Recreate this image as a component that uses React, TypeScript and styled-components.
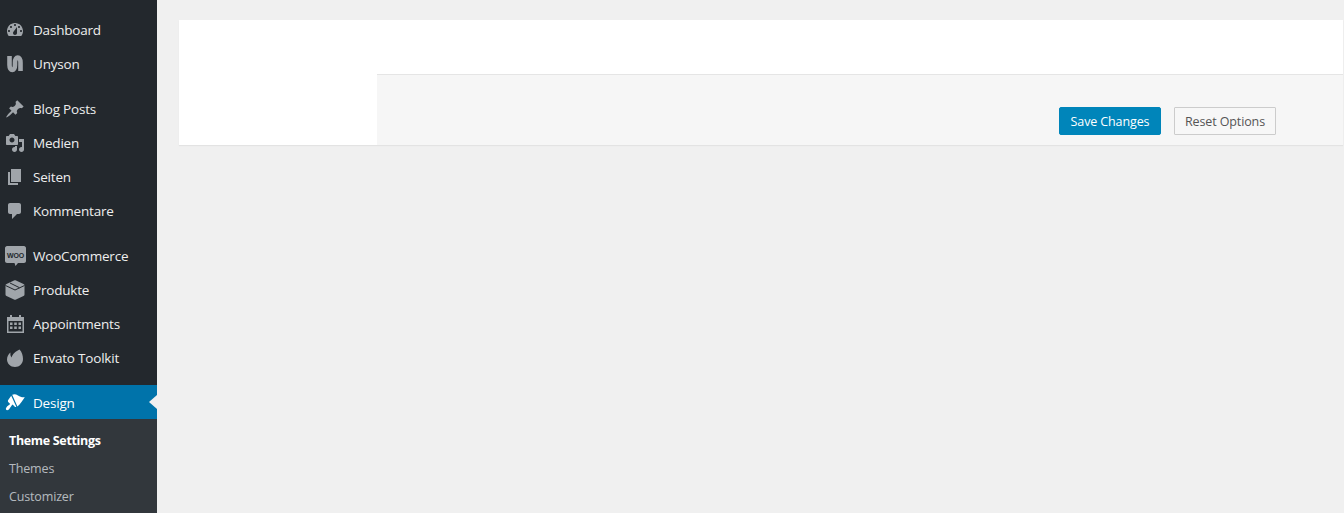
import React from 'react';
import styled, { createGlobalStyle } from 'styled-components';

const GlobalStyle = createGlobalStyle`
  html, body {
    margin: 0;
    height: 100%;
    overflow: hidden;
    background: #f0f0f0;
    font-family: 'Open Sans', 'Noto Sans', sans-serif;
  }
`;

const Page = styled.div`
  display: flex;
  height: 513px;
`;

const Sidebar = styled.nav`
  width: 157px;
  flex: none;
  padding-top: 13px;
  box-sizing: border-box;
  background: #23282d;
`;

const MenuGroup = styled.div<{ $gap: number }>`
  margin-bottom: ${p => p.$gap}px;
`;

const MenuItem = styled.div<{ $active?: boolean }>`
  position: relative;
  display: flex;
  align-items: center;
  height: 34px;
  box-sizing: border-box;
  padding-top: ${p => (p.$active ? 1 : 0)}px;
  font-size: 13.5px;
  letter-spacing: -0.2px;
  color: ${p => (p.$active ? '#fff' : '#eee')};
  background: ${p => (p.$active ? '#0073aa' : 'transparent')};
`;

const IconSlot = styled.span<{ $active?: boolean }>`
  display: flex;
  justify-content: center;
  align-items: center;
  width: 33px;
  height: 33px;
  padding-right: 3px;
  box-sizing: border-box;
  color: ${p => (p.$active ? '#fff' : '#a0a5aa')};
`;

const ActiveArrow = styled.span`
  position: absolute;
  right: 0;
  top: 10px;
  border: 7px solid transparent;
  border-left-width: 0;
  border-right: 8px solid #f0f0f0;
`;

const SubMenu = styled.div`
  background: #32373c;
  padding: 7px 0 3px;
  height: 94px;
`;

const SubItem = styled.div<{ $current?: boolean }>`
  display: flex;
  align-items: center;
  height: 28px;
  padding-left: 9px;
  font-size: 12.5px;
  letter-spacing: ${p => (p.$current ? -0.33 : -0.15)}px;
  font-weight: ${p => (p.$current ? 700 : 400)};
  color: ${p => (p.$current ? '#fff' : 'rgba(240, 245, 250, 0.7)')};
`;

const Main = styled.main`
  flex: 1;
  padding: 20px 1px 0 22px;
`;

const Card = styled.section`
  display: grid;
  grid-template-columns: 198px 1fr;
  height: 125px;
  background: #fff;
  box-shadow: 0 1px 1px rgba(0, 0, 0, 0.05);
`;

const Content = styled.div`
  display: flex;
  flex-direction: column;
  min-width: 0;
`;

const Body = styled.div`
  height: 54px;
`;

const Footer = styled.footer`
  flex: 1;
  display: flex;
  justify-content: flex-end;
  align-items: flex-start;
  gap: 13px;
  padding: 32px 67px 0 0;
  background: #f6f6f6;
  border-top: 1px solid #e5e5e5;
`;

const Button = styled.button<{ $primary?: boolean }>`
  width: 102px;
  height: 28px;
  padding: 0;
  box-sizing: border-box;
  font-family: inherit;
  font-size: 12.5px;
  letter-spacing: -0.12px;
  border-radius: ${p => (p.$primary ? 2 : 1)}px;
  border: 1px solid ${p => (p.$primary ? '#0085ba' : '#ccc')};
  color: ${p => (p.$primary ? '#fff' : '#555')};
  background: ${p => (p.$primary ? '#0085ba' : '#f7f7f7')};
`;

const Glyph = ({ d }: { d: string }) => (
  <svg width="20" height="20" viewBox="0 0 20 20" fill="currentColor">
    <path fillRule="evenodd" d={d} />
  </svg>
);

const UnysonIcon = () => (
  <svg width="20" height="20" viewBox="0 0 20 20" fill="none" stroke="currentColor" strokeWidth="4.600">
    <path d="M4.500 2v9c0 6.500 5.500 6.500 5.500 0V8.500c0-6.500 5.500-6.500 5.500 0V17" />
  </svg>
);

const WooIcon = () => (
  <svg width="21" height="22" viewBox="0 0 21 22">
    <path fill="currentColor" d="M2 1h17c1 0 2 1 2 2v13c0 1-1 2-2 2h-6l-2.500 3-1-3H2c-1 0-2-1-2-2V3c0-1 1-2 2-2z" />
    <text x="10.500" y="12.500" textAnchor="middle" fontFamily="'Liberation Sans', sans-serif" fontSize="7" fontWeight="700" fill="#23282d">
      WOO
    </text>
  </svg>
);

const BoxIcon = () => (
  <svg width="20" height="20" viewBox="0 0 20 20">
    <path
      fill="currentColor"
      d="M9 .400c.600-.300 1.400-.300 2 0l7.500 3.600c.600.300 1 .800 1 1.500v9c0 .700-.400 1.200-1 1.500L11 19.600c-.600.300-1.400.300-2 0L1.500 16c-.600-.300-1-.800-1-1.500v-9c0-.700.400-1.200 1-1.500z"
    />
    <path fill="none" stroke="#23282d" strokeWidth="1" d="M.500 5.500L10 10l9.500-4.500M5 3l9.500 4.700" />
  </svg>
);

const CalendarIcon = () => (
  <svg width="17" height="18" viewBox="0 0 17 18" fill="currentColor">
    <path fillRule="evenodd" d="M3 0h2v2h7V0h2v2h3v16H0V2h3zM1.500 6v10.500h14V6z" />
    <path d="M3 7.500h2.500v2.400H3zM7.200 7.500h2.600v2.400H7.200zM11.500 7.500H14v2.400h-2.500zM3 11.500h2.500v2.400H3zM7.200 11.500h2.600v2.400H7.200zM11.500 11.500H14v2.400h-2.500z" />
  </svg>
);

const LeafIcon = () => (
  <svg width="20" height="20" viewBox="0 0 20 20" fill="currentColor">
    <path d="M14.500 1.500c2.500 2.500 3.500 6 3.500 9.500 0 4.500-3.500 8-8 8s-8-3.500-8-7.500c0-3 1.500-5.500 3.500-7-.3 2 0 3.500 1 5C7.500 6 11 3 14.500 1.500z" />
  </svg>
);

const BrushIcon = () => (
  <svg width="20" height="20" viewBox="0 0 20 20" fill="currentColor">
    <path d="M7.200 1.800C9 .600 11 1.200 13 2.400c2.200 1.300 4.200 2.300 6.800 1.800-2 2.800-4.300 7-7.400 9.200z" />
    <path d="M6.200 2.700l5.100 11.100c-.500.400-1.100.300-1.500-.100L7.600 11.400c-1 1-2.200 2.600-3 4.200-.900 1.700-3 2.100-3.600.900-.600-1.300.900-3 2.300-4 .700-.500 1.300-1 1.900-1.500L3.200 9c-.500-.600-.500-1.300 0-1.900z" />
  </svg>
);

const dashboardPath =
  'M3.760 16h12.480c1.100-1.370 1.760-3.110 1.760-5 0-4.420-3.580-8-8-8s-8 3.580-8 8c0 1.890.660 3.630 1.760 5zM10 4c.550 0 1 .450 1 1s-.450 1-1 1-1-.450-1-1 .450-1 1-1zM6 6c.550 0 1 .450 1 1s-.450 1-1 1-1-.450-1-1 .450-1 1-1zm8 0c.550 0 1 .450 1 1s-.450 1-1 1-1-.450-1-1 .450-1 1-1zm-5.370 5.550L12 7v6c0 1.100-.900 2-2 2s-2-.900-2-2c0-.570.240-1.080.630-1.450zM4 10c.550 0 1 .450 1 1s-.450 1-1 1-1-.450-1-1 .450-1 1-1zm12 0c.550 0 1 .450 1 1s-.450 1-1 1-1-.450-1-1 .450-1 1-1z';
const pinPath =
  'M10.440 3.020l1.820-1.820 6.360 6.350-1.830 1.820c-1.050-.680-2.480-.570-3.410.360l-.750.750c-.920.930-1.040 2.350-.350 3.410l-1.830 1.820-2.410-2.410-2.800 2.790c-.420.420-3.380 2.710-3.800 2.290s1.860-3.390 2.280-3.810l2.790-2.790L4.100 9.360l1.830-1.820c1.050.690 2.480.570 3.400-.360l.750-.750c.930-.920 1.050-2.350.360-3.410z';
const mediaPath =
  'M13 11V4c0-.550-.450-1-1-1h-1.670L9 1H5L3.670 3H2c-.550 0-1 .450-1 1v7c0 .550.450 1 1 1h10c.550 0 1-.450 1-1zM7 4.500c1.380 0 2.500 1.120 2.500 2.500S8.380 9.500 7 9.500 4.500 8.380 4.500 7 5.620 4.500 7 4.500zM14 6h5v10.500c0 1.380-1.120 2.500-2.500 2.500S14 17.880 14 16.500s1.120-2.500 2.500-2.500c.170 0 .340.020.500.050V9h-3V6zm-4 8.050V13h2v3.500c0 1.380-1.120 2.500-2.500 2.500S7 17.880 7 16.500 8.120 14 9.500 14c.170 0 .340.020.500.050z';
const pagePath = 'M6 15V2h10v13H6zm-1 1h8v2H3V5h2v11z';
const commentPath =
  'M5 2h9c1.100 0 2 .900 2 2v7c0 1.100-.900 2-2 2h-2l-5 5v-5H5c-1.100 0-2-.900-2-2V4c0-1.100.900-2 2-2z';

type Item = { label: string; icon: React.ReactNode };

const groups: { gap: number; items: Item[] }[] = [
  {
    gap: 11,
    items: [
      { label: 'Dashboard', icon: <Glyph d={dashboardPath} /> },
      { label: 'Unyson', icon: <UnysonIcon /> },
    ],
  },
  {
    gap: 11,
    items: [
      { label: 'Blog Posts', icon: <Glyph d={pinPath} /> },
      { label: 'Medien', icon: <Glyph d={mediaPath} /> },
      { label: 'Seiten', icon: <Glyph d={pagePath} /> },
      { label: 'Kommentare', icon: <Glyph d={commentPath} /> },
    ],
  },
  {
    gap: 10,
    items: [
      { label: 'WooCommerce', icon: <WooIcon /> },
      { label: 'Produkte', icon: <BoxIcon /> },
      { label: 'Appointments', icon: <CalendarIcon /> },
      { label: 'Envato Toolkit', icon: <LeafIcon /> },
    ],
  },
];

export default function App() {
  return (
    <Page>
      <GlobalStyle />
      <Sidebar>
        {groups.map(group => (
          <MenuGroup key={group.items[0].label} $gap={group.gap}>
            {group.items.map(item => (
              <MenuItem key={item.label}>
                <IconSlot>{item.icon}</IconSlot>
                {item.label}
              </MenuItem>
            ))}
          </MenuGroup>
        ))}
        <MenuItem $active>
          <IconSlot $active>
            <BrushIcon />
          </IconSlot>
          Design
          <ActiveArrow />
        </MenuItem>
        <SubMenu>
          <SubItem $current>Theme Settings</SubItem>
          <SubItem>Themes</SubItem>
          <SubItem>Customizer</SubItem>
        </SubMenu>
      </Sidebar>
      <Main>
        <Card>
          <div />
          <Content>
            <Body />
            <Footer>
              <Button $primary>Save Changes</Button>
              <Button>Reset Options</Button>
            </Footer>
          </Content>
        </Card>
      </Main>
    </Page>
  );
}
